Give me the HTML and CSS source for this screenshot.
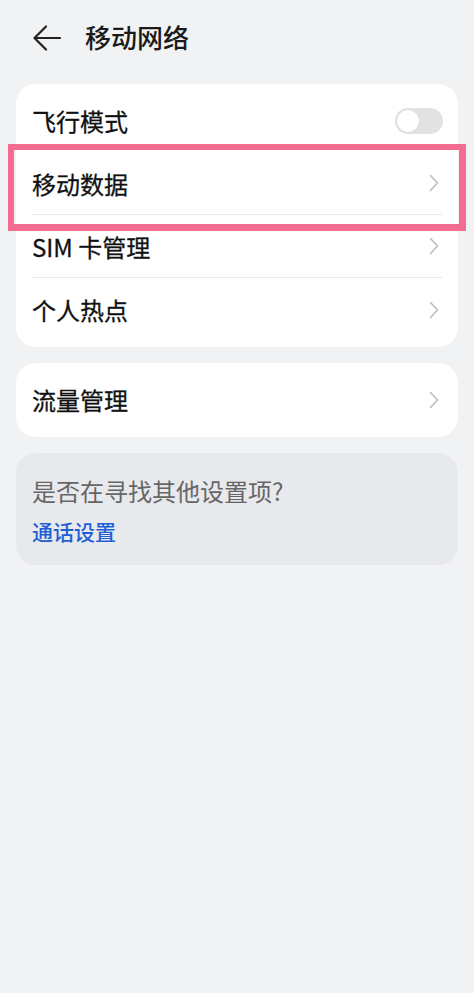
FILE: index.html
```html
<!DOCTYPE html>
<html lang="zh-CN">
<head>
  <meta charset="UTF-8">
  <meta name="viewport" content="width=device-width, initial-scale=1.0">
  <title>移动网络</title>
  <link rel="stylesheet" href="styles.css">
</head>
<body>
  <div class="page">
    <header class="top-bar">
      <svg class="back-icon" width="28" height="26" viewBox="0 0 28 26">
        <path d="M27 13H2M13 1.5L1.5 13L13 24.5" fill="none" stroke="#222" stroke-width="2.2" stroke-linecap="round" stroke-linejoin="round"/>
      </svg>
      <h1 class="title">移动网络</h1>
    </header>

    <div class="card">
      <div class="row">
        <div class="row-inner">
          <span class="label">飞行模式</span>
          <span class="switch"><span class="knob"></span></span>
        </div>
      </div>
      <div class="row highlighted">
        <div class="row-inner divided">
          <span class="label">移动数据</span>
          <svg class="chevron" width="10" height="18" viewBox="0 0 10 18"><path d="M1.5 1.5L8.5 9L1.5 16.5" fill="none" stroke="#bdbdbd" stroke-width="1.6" stroke-linecap="round" stroke-linejoin="round"/></svg>
        </div>
        <div class="mark"></div>
      </div>
      <div class="row">
        <div class="row-inner divided">
          <span class="label">SIM 卡管理</span>
          <svg class="chevron" width="10" height="18" viewBox="0 0 10 18"><path d="M1.5 1.5L8.5 9L1.5 16.5" fill="none" stroke="#bdbdbd" stroke-width="1.6" stroke-linecap="round" stroke-linejoin="round"/></svg>
        </div>
      </div>
      <div class="row">
        <div class="row-inner">
          <span class="label">个人热点</span>
          <svg class="chevron" width="10" height="18" viewBox="0 0 10 18"><path d="M1.5 1.5L8.5 9L1.5 16.5" fill="none" stroke="#bdbdbd" stroke-width="1.6" stroke-linecap="round" stroke-linejoin="round"/></svg>
        </div>
      </div>
    </div>

    <div class="card">
      <div class="row">
        <div class="row-inner">
          <span class="label">流量管理</span>
          <svg class="chevron" width="10" height="18" viewBox="0 0 10 18"><path d="M1.5 1.5L8.5 9L1.5 16.5" fill="none" stroke="#bdbdbd" stroke-width="1.6" stroke-linecap="round" stroke-linejoin="round"/></svg>
        </div>
      </div>
    </div>

    <div class="card hint">
      <p class="hint-text">是否在寻找其他设置项?</p>
      <a class="hint-link" href="#">通话设置</a>
    </div>
  </div>
</body>
</html>
```

FILE: styles.css
```css
/* Global Styles */
* {
  margin: 0;
  padding: 0;
  box-sizing: border-box;
  font-family: "Noto Sans CJK SC", "Noto Sans", sans-serif;
}

body {
  background: #f1f2f4;
  color: #1a1a1a;
  min-height: 100vh;
}

.page {
  width: 474px;
  min-height: 993px;
  display: flex;
  flex-direction: column;
  gap: 16px;
  padding: 0 16px;
}

.top-bar {
  height: 68px;
  display: flex;
  align-items: center;
  gap: 24px;
  padding-left: 17px;
}

.back-icon {
  flex-shrink: 0;
  margin-top: 8px;
}

.title {
  font-size: 26px;
  font-weight: 500;
  line-height: 1;
  color: #1a1a1a;
  margin-top: 6px;
}

.card {
  background: #ffffff;
  border-radius: 20px;
  padding: 5px 0 6px;
}

.row {
  position: relative;
  padding: 0 16px;
}

.row-inner {
  height: 63px;
  display: flex;
  align-items: center;
  justify-content: space-between;
}

.divided {
  border-bottom: 1px solid #e9e9eb;
}

.label {
  font-size: 24px;
  font-weight: 400;
  color: #111111;
  -webkit-text-stroke: 0.3px #111111;
}

.chevron {
  margin-right: 3px;
  flex-shrink: 0;
}

/* toggle */
.switch {
  width: 48px;
  height: 26px;
  border-radius: 13px;
  background: #e2e2e4;
  padding: 2px;
  display: flex;
  margin-right: -1px;
}

.knob {
  width: 22px;
  height: 22px;
  border-radius: 50%;
  background: #ffffff;
  box-shadow: 0 0 1px rgba(0, 0, 0, 0.15);
}

/* annotation frame */
.mark {
  position: absolute;
  top: -8px;
  bottom: -16px;
  left: -8px;
  right: -8px;
  border: 6px solid #f36c92;
  border-right-width: 7px;
  border-bottom-width: 7px;
}

/* hint card */
.hint {
  background: #e8e9ec;
  padding: 22px 16px 18px;
}

.hint-text {
  font-size: 24px;
  line-height: 32px;
  color: #666666;
}

.hint-link {
  display: block;
  margin-top: 8px;
  font-size: 21px;
  line-height: 32px;
  font-weight: 500;
  color: #1f5fd6;
  text-decoration: none;
}
```
